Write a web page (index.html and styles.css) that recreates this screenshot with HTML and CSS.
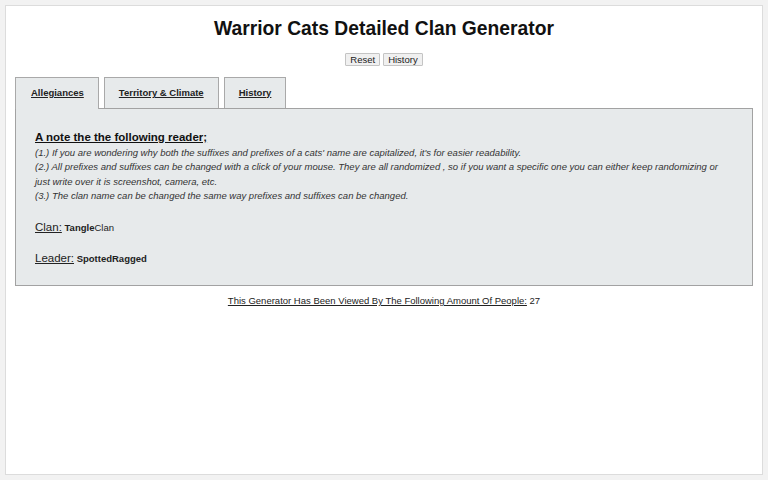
FILE: index.html
```html
<!DOCTYPE html>
<html lang="en">
<head>
    <meta charset="UTF-8">
    <meta name="viewport" content="width=device-width, initial-scale=1.0">
    <title>Warrior Cats Detailed Clan Generator</title>
    <link rel="stylesheet" href="styles.css">
</head>
<body>
    <div class="page">
        <h1>Warrior Cats Detailed Clan Generator</h1>
        <div class="controls">
            <button type="button">Reset</button>
            <button type="button">History</button>
        </div>

        <div class="tabs">
            <div class="tab active">Allegiances</div>
            <div class="tab">Territory &amp; Climate</div>
            <div class="tab">History</div>
        </div>

        <div class="panel">
            <h2 class="note-title">A note the the following reader;</h2>
            <p class="note">(1.) If you are wondering why both the suffixes and prefixes of a cats' name are capitalized, it's for easier readability.<br>
            (2.) All prefixes and suffixes can be changed with a click of your mouse. They are all randomized , so if you want a specific one you can either keep randomizing or just write over it is screenshot, camera, etc.<br>
            (3.) The clan name can be changed the same way prefixes and suffixes can be changed.</p>

            <p class="field"><span class="label">Clan:</span> <b>Tangle</b>Clan</p>
            <p class="field"><span class="label">Leader:</span> <b>SpottedRagged</b></p>
        </div>

        <p class="counter"><u>This Generator Has Been Viewed By The Following Amount Of People:</u> 27</p>
    </div>
</body>
</html>
```

FILE: styles.css
```css
html {
    background-color: #f2f2f2;
}
body {
    margin: 0;
    padding: 5px;
    font-family: "Liberation Sans", Arial, sans-serif;
    color: #222;
}
.page {
    height: 470px;
    box-sizing: border-box;
    background-color: #fff;
    border: 1px solid #dcdcdc;
    padding: 0 9px;
}
h1 {
    margin: 11px 0 0;
    font-size: 19.3px;
    line-height: 23px;
    text-align: center;
    color: #111;
}
.controls {
    margin-top: 13px;
    display: flex;
    justify-content: center;
    gap: 3px;
}
button {
    font-family: "Liberation Sans", Arial, sans-serif;
    font-size: 9.5px;
    padding: 1px 4px;
    height: 13px;
    line-height: 9px;
    background-color: #f0f0f0;
    border: 1px solid #c4c4c4;
    border-radius: 1px;
    color: #222;
}
.tabs {
    margin-top: 11px;
    display: flex;
    gap: 5px;
    position: relative;
    z-index: 1;
}
.tab {
    height: 31px;
    box-sizing: border-box;
    padding: 0 14px;
    line-height: 30px;
    font-size: 9.5px;
    font-weight: bold;
    text-decoration: underline;
    background-color: #e7eaeb;
    border: 1px solid #a9a9a9;
    border-bottom: none;
}
.tab.active {
    height: 32px;
    padding: 0 14px 0 15px;
}
.panel {
    margin-top: -1px;
    height: 178px;
    box-sizing: border-box;
    background-color: #e7eaeb;
    border: 1px solid #a2a2a2;
    padding: 20px 19px 0;
}
.note-title {
    margin: 0 0 1px;
    font-size: 11.5px;
    line-height: 16px;
    text-decoration: underline;
    color: #111;
}
.note {
    margin: 0 0 15px;
    font-size: 9.5px;
    line-height: 14.4px;
    font-style: italic;
    color: #333;
}
.field {
    margin: 0 0 14px;
    font-size: 9.5px;
    line-height: 16px;
}
.field .label {
    font-size: 11.5px;
    text-decoration: underline;
}
.field b {
    font-size: 9.5px;
}
.counter {
    margin: 9px 0 0;
    text-align: center;
    font-size: 9.5px;
}
```
